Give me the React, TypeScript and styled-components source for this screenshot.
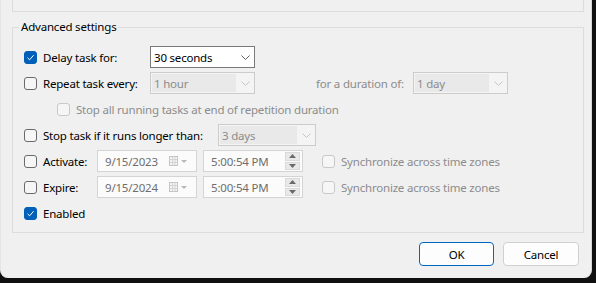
import React from "react";
import styled, { createGlobalStyle } from "styled-components";

const Global = createGlobalStyle`
  html, body { margin: 0; padding: 0; background: #101010; }
  body {
    width: 596px; height: 283px; overflow: hidden;
    font-family: "Segoe UI", "Noto Sans", "Open Sans", sans-serif;
    font-size: 11.5px; letter-spacing: -0.2px; color: #000;
  }
  * { box-sizing: border-box; }
`;

const Window = styled.div`
  width: 592px;
  height: 278px;
  background: #f0f0f0;
  border-right: 1px solid #d6d6d6;
  border-left: 1px solid #e4e4e4;
  border-radius: 0 0 8px 8px;
  padding: 0 7px 0 11px;
  display: flex;
  flex-direction: column;
`;

const TopGroup = styled.div`
  height: 12px;
  border: 1px solid #dcdcdc;
  border-top: none;
`;

const GroupBox = styled.div`
  margin-top: 15px;
  height: 206px;
  border: 1px solid #dcdcdc;
  display: flex;
  flex-direction: column;
`;

const GroupTitle = styled.div`
  width: fit-content;
  margin: -9px 0 9px 6px;
  padding: 0 2px;
  line-height: 16px;
  background: #f0f0f0;
`;

const Row = styled.div<{ $indent?: number }>`
  height: 26px;
  display: flex;
  align-items: center;
  padding-left: ${(p) => p.$indent ?? 11}px;
`;

const Field = styled.label<{ $width?: number; $disabled?: boolean }>`
  display: flex;
  align-items: center;
  gap: 6px;
  width: ${(p) => (p.$width ? `${p.$width}px` : "auto")};
  flex: none;
  color: ${(p) => (p.$disabled ? "#8c8c8c" : "#000")};
  white-space: nowrap;
`;

const Box = styled.span<{ $checked?: boolean; $disabled?: boolean }>`
  width: 13px;
  height: 13px;
  flex: none;
  border-radius: 3px;
  display: flex;
  align-items: center;
  justify-content: center;
  background: ${(p) => (p.$checked ? "#005fb8" : "#f6f6f6")};
  border: 1px solid
    ${(p) => (p.$checked ? "#005fb8" : p.$disabled ? "#c9c9c9" : "#6a6a6a")};
`;

const Check = ({ checked, disabled }: { checked?: boolean; disabled?: boolean }) => (
  <Box $checked={checked} $disabled={disabled}>
    {checked && (
      <svg width="9" height="9" viewBox="0 0 9 9">
        <path d="M1.5 4.8 L3.6 6.8 L7.6 2.2" fill="none" stroke="#fff" strokeWidth="1" />
      </svg>
    )}
  </Box>
);

const SelectBox = styled.div<{ $width: number; $disabled?: boolean }>`
  width: ${(p) => p.$width}px;
  height: 22px;
  flex: none;
  display: flex;
  align-items: center;
  padding: 1px;
  background: ${(p) => (p.$disabled ? "#f4f4f4" : "#fff")};
  border: 1px solid ${(p) => (p.$disabled ? "#cccccc" : "#7a7a7a")};
`;

const SelectValue = styled.span<{ $disabled?: boolean }>`
  flex: 1;
  height: 100%;
  display: flex;
  align-items: center;
  padding-left: 2px;
  margin-right: 2px;
  background: ${(p) => (p.$disabled ? "#e9e9e9" : "transparent")};
  color: ${(p) => (p.$disabled ? "#8c8c8c" : "#000")};
  white-space: nowrap;
`;

const Arrow = styled.span`
  width: 15px;
  flex: none;
  display: flex;
  align-items: center;
  justify-content: center;
`;

const Select = ({ width, value, disabled }: { width: number; value: string; disabled?: boolean }) => (
  <SelectBox $width={width} $disabled={disabled}>
    <SelectValue $disabled={disabled}>{value}</SelectValue>
    <Arrow>
      <svg width="9" height="5" viewBox="0 0 9 5">
        <path d="M0.5 0.5 L4.5 4.5 L8.5 0.5" fill="none" stroke={disabled ? "#c4c4c4" : "#606060"} strokeWidth="1" />
      </svg>
    </Arrow>
  </SelectBox>
);

const InputBox = styled.div<{ $width: number }>`
  width: ${(p) => p.$width}px;
  height: 22px;
  flex: none;
  display: flex;
  align-items: center;
  padding: 0 2px 0 7px;
  background: #fbfbfb;
  border: 1px solid #d4d4d4;
  color: #6e6e6e;
`;

const InputText = styled.span`
  flex: 1;
  white-space: nowrap;
`;

const CalIcon = () => (
  <svg width="19" height="10" viewBox="0 0 19 10">
    <rect x="0.5" y="0.5" width="8" height="9" fill="#f4f4f4" stroke="#c4c4c4" />
    <path d="M0.5 3.5 H8.5 M0.5 6.5 H8.5 M3.5 0.5 V9.5 M6 0.5 V9.5" stroke="#d4d4d4" />
    <path d="M12 4 L18 4 L15 7 Z" fill="#b8b8b8" />
  </svg>
);

const Spinner = styled.div`
  width: 15px;
  height: 18px;
  display: flex;
  flex-direction: column;
  gap: 1px;
`;

const SpinBtn = styled.span`
  flex: 1;
  display: flex;
  align-items: center;
  justify-content: center;
  background: #e8e8e8;
  border: 1px solid #dadada;
`;

const Tri = ({ up }: { up?: boolean }) => (
  <svg width="7" height="4" viewBox="0 0 7 4">
    <path d={up ? "M0 4 L3.5 0 L7 4 Z" : "M0 0 L7 0 L3.5 4 Z"} fill="#6a6a6a" />
  </svg>
);

const Spacer = styled.span<{ $w: number }>`
  width: ${(p) => p.$w}px;
  flex: none;
`;

const DateInput = ({ value }: { value: string }) => (
  <InputBox $width={100}>
    <InputText>{value}</InputText>
    <CalIcon />
    <Spacer $w={6} />
  </InputBox>
);

const TimeInput = ({ value }: { value: string }) => (
  <InputBox $width={100}>
    <InputText>{value}</InputText>
    <Spinner>
      <SpinBtn><Tri up /></SpinBtn>
      <SpinBtn><Tri /></SpinBtn>
    </Spinner>
  </InputBox>
);

const DurationLabel = styled.span`
  width: 97px;
  flex: none;
  color: #8c8c8c;
  white-space: nowrap;
`;

const Buttons = styled.div`
  display: flex;
  justify-content: flex-end;
  gap: 9px;
  margin-top: 9px;
  padding-right: 5px;
`;

const Button = styled.button<{ $primary?: boolean; $width: number }>`
  width: ${(p) => p.$width}px;
  height: 24px;
  font: inherit;
  letter-spacing: inherit;
  color: #000;
  background: #fdfdfd;
  border: 1px solid ${(p) => (p.$primary ? "#0067c0" : "#d0d0d0")};
  border-radius: 4px;
  padding: 0;
`;

export default function App() {
  return (
    <>
      <Global />
      <Window>
        <TopGroup />
        <GroupBox>
          <GroupTitle>Advanced settings</GroupTitle>
          <Row>
            <Field $width={126}><Check checked />Delay task for:</Field>
            <Select width={105} value="30 seconds" />
          </Row>
          <Row>
            <Field $width={126}><Check />Repeat task every:</Field>
            <Select width={105} value="1 hour" disabled />
            <Spacer $w={61} />
            <DurationLabel>for a duration of:</DurationLabel>
            <Select width={95} value="1 day" disabled />
          </Row>
          <Row $indent={44}>
            <Field $disabled><Check disabled />Stop all running tasks at end of repetition duration</Field>
          </Row>
          <Row>
            <Field $width={194}><Check />Stop task if it runs longer than:</Field>
            <Select width={98} value="3 days" disabled />
          </Row>
          <Row>
            <Field $width={73}><Check />Activate:</Field>
            <DateInput value="9/15/2023" />
            <Spacer $w={6} />
            <TimeInput value="5:00:54 PM" />
            <Spacer $w={19} />
            <Field $disabled><Check disabled />Synchronize across time zones</Field>
          </Row>
          <Row>
            <Field $width={73}><Check />Expire:</Field>
            <DateInput value="9/15/2024" />
            <Spacer $w={6} />
            <TimeInput value="5:00:54 PM" />
            <Spacer $w={19} />
            <Field $disabled><Check disabled />Synchronize across time zones</Field>
          </Row>
          <Row>
            <Field><Check checked />Enabled</Field>
          </Row>
        </GroupBox>
        <Buttons>
          <Button $primary $width={75}>OK</Button>
          <Button $width={76}>Cancel</Button>
        </Buttons>
      </Window>
    </>
  );
}
